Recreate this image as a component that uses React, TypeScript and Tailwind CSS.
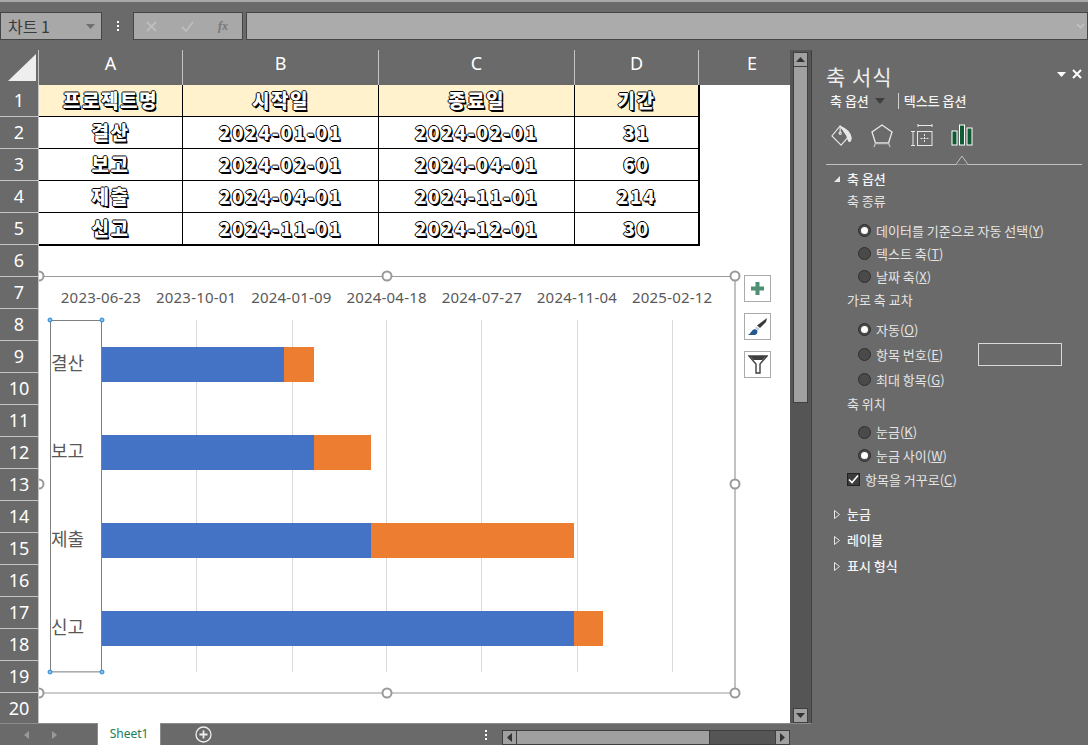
import React from "react";

const KR = "font-['Noto_Sans_CJK_KR','Noto_Sans',sans-serif]";
const rows = [
  ["프로젝트명", "시작일", "종료일", "기간"],
  ["결산", "2024-01-01", "2024-02-01", "31"],
  ["보고", "2024-02-01", "2024-04-01", "60"],
  ["제출", "2024-04-01", "2024-11-01", "214"],
  ["신고", "2024-11-01", "2024-12-01", "30"],
];
const cols = [
  { l: "A", w: "w-[144px]" },
  { l: "B", w: "w-[196px]" },
  { l: "C", w: "w-[196px]" },
  { l: "D", w: "w-[124px]" },
  { l: "E", w: "w-[106px]" },
];
const bodyCols = ["w-[144px]", "w-[196px]", "w-[196px]", "w-[123px]"];
const fancy =
  "font-black text-[19px] tracking-[1.6px] text-white [text-shadow:1px_0_0_#000,-1px_0_0_#000,0_1px_0_#000,0_-1px_0_#000,1.5px_1.5px_0_#000]";

function Radio({ on, label, u, h = "h-[25px]" }: { on?: boolean; label: string; u: string; h?: string }) {
  return (
    <div className={"flex items-center pl-[11px] " + h}>
      <span className="flex h-[13px] w-[13px] items-center justify-center rounded-full border border-[#2e2e2e] bg-[#4a4a4a]">
        {on && <span className="h-[7px] w-[7px] rounded-full bg-white" />}
      </span>
      <span className="ml-[5px] text-[13px] text-[#e4e4e4]">
        {label}(<span className="underline">{u}</span>)
      </span>
    </div>
  );
}

function Handle({ x, y }: { x: number; y: number }) {
  return <circle cx={x} cy={y} r={4.5} fill="#fff" stroke="#9a9a9a" strokeWidth={2} />;
}

function Chart() {
  const grid = [196, 292, 386, 481, 577, 672];
  const dates = ["2023-06-23", "2023-10-01", "2024-01-09", "2024-04-18", "2024-07-27", "2024-11-04", "2025-02-12"];
  const bars = [
    ["결산", 347, 284, 314],
    ["보고", 435, 314, 371],
    ["제출", 523, 371, 574],
    ["신고", 611, 574, 603],
  ] as const;
  return (
    <svg className="absolute left-[39px] top-0" width={751} height={673} viewBox="39 50 751 673">
      <rect x={39} y={276} width={696} height={417} fill="#fff" />
      <path d="M39 276.500H735V693H39" fill="none" stroke="#9a9a9a" strokeWidth={1.2} />
      {grid.map((x) => (
        <line key={x} x1={x + 0.5} x2={x + 0.5} y1={320} y2={672} stroke="#d9d9d9" />
      ))}
      {dates.map((d, i) => (
        <text key={d} x={101 + i * 95.2} y={303} textAnchor="middle" fontSize={15} letterSpacing={0.2} fill="#595959" fontFamily="'Noto Sans','Open Sans',sans-serif">
          {d}
        </text>
      ))}
      <rect x={50.5} y={320.5} width={51} height={351} fill="none" stroke="#808080" />
      <line x1={50} x2={102} y1={672} y2={672} stroke="#bdbdbd" strokeWidth={1.5} />
      {bars.map(([n, y, m, e]) => (
        <g key={n}>
          <rect x={102} y={y} width={m - 102} height={35} fill="#4472c4" />
          <rect x={m} y={y} width={e - m} height={35} fill="#ed7d31" />
          <text x={51} y={y + 23} fontSize={18} fill="#595959" fontFamily="'Noto Sans CJK KR',sans-serif">
            {n}
          </text>
        </g>
      ))}
      {[[50, 320], [102, 320], [50, 672], [102, 672]].map(([x, y]) => (
        <circle key={x + "-" + y} cx={x} cy={y} r={2} fill="#7cc0f0" stroke="#2f86d8" strokeWidth={1} />
      ))}
      <Handle x={39} y={276} />
      <Handle x={387} y={276} />
      <Handle x={735} y={276} />
      <Handle x={39} y={484} />
      <Handle x={735} y={484} />
      <Handle x={39} y={693} />
      <Handle x={387} y={693} />
      <Handle x={735} y={693} />
    </svg>
  );
}

function ChartButtons() {
  const cls = "flex h-[27px] w-[27px] items-center justify-center border border-[#ababab] bg-white";
  return (
    <div className="absolute left-[744px] top-[225px] flex flex-col gap-[11px]">
      <div className={cls}>
        <svg width="15" height="15" viewBox="0 0 15 15"><path d="M5.500 1h4v4.500H14v4H9.500V14h-4V9.500H1v-4h4.500z" fill="#4f8f73" /></svg>
      </div>
      <div className={cls}>
        <svg width="20" height="20" viewBox="0 0 20 20">
          <path d="M19 1l-1 4-6 6-3-2.500z" fill="#3a3a3a" />
          <path d="M8.500 9.500l3 2.500-1.500 1.500-2.800-2.400z" fill="#b8c8dc" />
          <path d="M6.500 12c2 .5 3 1.500 3 2.500 0 1.500-1 3-2.500 3.500H0c3-1.500 3-4.500 6.500-6z" fill="#23598f" />
        </svg>
      </div>
      <div className={cls}>
        <svg width="20" height="19" viewBox="0 0 20 19">
          <path d="M1 1h18l-7 8v9H8V9z" fill="#fff" stroke="#3f3f3f" strokeWidth="1.400" />
          <path d="M2 1h16l-3.500 4h-9z" fill="#3f3f3f" />
        </svg>
      </div>
    </div>
  );
}

function Sheet() {
  const headBorder = "border-r border-[#c4c4c4]";
  return (
    <div className="relative h-[673px] w-[790px] overflow-hidden bg-white">
      <div className="flex h-[35px] bg-[#6a6a6a]">
        <div className={"relative h-[35px] w-[39px] shrink-0 " + headBorder}>
          <svg className="absolute left-[7px] top-[4px]" width="30" height="28" viewBox="0 0 30 28"><path d="M29 0v27H1z" fill="#eeeeee" /></svg>
        </div>
        {cols.map((c, i) => (
          <div key={c.l} className={"flex shrink-0 items-center justify-center pb-[8px] text-[18px] text-white font-['Noto_Sans',sans-serif] " + c.w + (i < 4 ? " " + headBorder : "")}>
            {c.l}
          </div>
        ))}
      </div>
      <div className="flex">
        <div className="w-[39px] shrink-0 bg-[#6a6a6a]">
          {Array.from({ length: 20 }, (_, i) => (
            <div key={i} className="flex h-[32px] items-center justify-center border-b border-r border-[#c4c4c4] text-[18px] text-white font-['Noto_Sans',sans-serif]">
              {i + 1}
            </div>
          ))}
        </div>
        <div className={"self-start border-b-2 border-r-2 border-black " + KR}>
          {rows.map((r, i) => (
            <div key={i} className={"flex " + (i === 4 ? "h-[31px]" : "h-[32px] border-b border-black") + (i === 0 ? " bg-[#fff2cc]" : " bg-white")}>
              {r.map((t, j) => (
                <div key={j} className={"flex items-center justify-center " + bodyCols[j] + (j < 3 ? " border-r border-black" : "") + " " + fancy}>
                  {t}
                </div>
              ))}
            </div>
          ))}
        </div>
      </div>
      <Chart />
      <ChartButtons />
    </div>
  );
}

function VScroll() {
  return (
    <div className="flex h-[673px] w-[21px] flex-col bg-[#555555] pl-[3px] pt-[2px]">
      <div className="flex h-[15px] w-[15px] items-center justify-center border border-[#3f3f3f] bg-[#a0a0a0]">
        <svg width="9" height="5"><path d="M0 5h9L4.500 0z" fill="#333" /></svg>
      </div>
      <div className="h-[336px] w-[15px] border-x border-b border-[#3f3f3f] bg-[#a0a0a0]" />
      <div className="flex-1" />
      <div className="flex h-[15px] w-[15px] items-center justify-center border border-[#3f3f3f] bg-[#a0a0a0]">
        <svg width="9" height="5"><path d="M0 0h9L4.500 5z" fill="#333" /></svg>
      </div>
    </div>
  );
}

function Panel() {
  const heading = "text-[13px] text-[#e4e4e4]";
  const strong = "text-[13px] font-medium text-[#f4f4f4]";
  return (
    <div className={"h-full flex-1 border-l border-[#3f3f3f] pl-[14px] pr-[6px] pt-[12px] " + KR}>
      <div className="flex items-center justify-between">
        <span className="text-[21px] leading-[28px] tracking-[1px] text-[#eeeeee]">축 서식</span>
        <div className="mb-[4px] flex items-center gap-[6px]">
          <svg width="9" height="5"><path d="M0 0h9L4.500 5z" fill="#fff" /></svg>
          <svg width="10" height="10" viewBox="0 0 10 10"><path d="M1 1l8 8M9 1l-8 8" stroke="#fff" strokeWidth="2" /></svg>
        </div>
      </div>
      <div className={"mt-[2px] flex h-[18px] items-center pl-[4px] " + strong}>
        <span>축 옵션</span>
        <svg className="ml-[6px]" width="10" height="6"><path d="M0 0h10L5 6z" fill="#3d3d3d" /></svg>
        <span className="ml-[13px] mr-[5px] h-[16px] w-px bg-[#d0d0d0]" />
        <span>텍스트 옵션</span>
      </div>
      <div className="mt-[14px] flex h-[26px] items-start gap-[18px] pl-[5px]">
        <svg width="22" height="24" viewBox="0 0 24 24" fill="none" stroke="#e8e8e8" strokeWidth="1.200">
          <path d="M10 1L1 12l10 10 8-9z" />
          <path d="M10 1v7" /><circle cx="10" cy="9" r="1.200" />
          <path d="M11 2c5 2 10 6 11 12 0 4-2 5-3 3l-2-6z" fill="#e8e8e8" />
        </svg>
        <svg width="22" height="24" viewBox="0 0 22 24" fill="none" stroke="#e8e8e8" strokeWidth="1.300">
          <path d="M11 1l10 7-3.500 11h-13L1 8z" />
          <path d="M3 23l1.500-4M19 23l-1.500-4M4.500 19.500h13" stroke="#bdbdbd" />
        </svg>
        <svg width="22" height="22" viewBox="0 0 22 22" fill="none" stroke="#e8e8e8" strokeWidth="1">
          <path d="M7 1.500h14M7 0v3M21 0v3M0 7.500h4M0 21.500h4M2 7.500v14" />
          <rect x="6.500" y="7.500" width="14.500" height="14" />
          <path d="M13.500 10v9M9.500 14.500h8" strokeDasharray="2 1" />
        </svg>
        <svg width="22" height="22" viewBox="0 0 22 22">
          <rect x="1" y="7" width="5" height="14" fill="#0f5c34" stroke="#fff" />
          <rect x="8.500" y="1" width="5" height="20" fill="#0f5c34" stroke="#fff" />
          <rect x="16" y="4" width="5" height="17" fill="#0f5c34" stroke="#fff" />
        </svg>
      </div>
      <div className="relative mt-[14px] h-px bg-[#c0c0c0]">
        <svg className="absolute left-[129px] top-[-9px]" width="14" height="10"><path d="M0 9.500h1L7 1l6 8.500h1" fill="#686868" stroke="#c0c0c0" /></svg>
      </div>
      <div className="mt-[4px] flex h-[20px] items-center">
        <svg className="ml-[8px] mr-[7px]" width="6" height="6"><path d="M6 0v6H0z" fill="#e8e8e8" /></svg>
        <span className={strong}>축 옵션</span>
      </div>
      <div className="pl-[21px]">
        <div className={"flex h-[24px] items-center " + heading}>축 종류</div>
        <div className="mt-[6px]">
          <Radio on h="h-[23px]" label="데이터를 기준으로 자동 선택" u="Y" />
          <Radio h="h-[23px]" label="텍스트 축" u="T" />
          <Radio h="h-[23px]" label="날짜 축" u="X" />
        </div>
        <div className={"flex h-[24px] items-center " + heading}>가로 축 교차</div>
        <div className="mt-[5px]">
          <Radio on label="자동" u="O" />
          <div className="flex items-center">
            <div className="w-[131px]"><Radio label="항목 번호" u="E" /></div>
            <div className="h-[23px] w-[84px] border border-[#d8d8d8]" />
          </div>
          <Radio label="최대 항목" u="G" />
        </div>
        <div className={"flex h-[23px] items-center " + heading}>축 위치</div>
        <div className="mt-[5px]">
          <Radio h="h-[24px]" label="눈금" u="K" />
          <Radio on h="h-[23px]" label="눈금 사이" u="W" />
        </div>
        <div className="flex h-[25px] items-center">
          <span className="flex h-[13px] w-[13px] items-center justify-center border border-[#222] bg-[#3c3c3c]">
            <svg width="11" height="9" viewBox="0 0 11 9"><path d="M1 4.500l3 3 6-7" fill="none" stroke="#fff" strokeWidth="1.600" /></svg>
          </span>
          <span className="ml-[5px] text-[13px] text-[#e4e4e4]">항목을 거꾸로(<span className="underline">C</span>)</span>
        </div>
      </div>
      <div className="mt-[9px]">
        {["눈금", "레이블", "표시 형식"].map((t) => (
          <div key={t} className="flex h-[26px] items-center">
            <svg className="ml-[8px] mr-[7px]" width="6" height="9"><path d="M.5.5l5 4-5 4z" fill="none" stroke="#e8e8e8" /></svg>
            <span className={strong}>{t}</span>
          </div>
        ))}
      </div>
    </div>
  );
}

export default function App() {
  return (
    <div className={"h-[745px] w-[1088px] overflow-hidden bg-[#6a6a6a] " + KR}>
      <div className="h-[2px] bg-[#a8a8a8]" />
      <div className="flex h-[48px] items-start pt-[10px]">
        <div className="flex h-[28px] w-[102px] items-center justify-between border border-[#454545] bg-[#a8a8a8] pl-[7px] pr-[6px] text-[16px] text-[#3a3a3a]">
          <span>차트 1</span>
          <svg width="9" height="5"><path d="M0 0h9L4.500 5z" fill="#707070" /></svg>
        </div>
        <div className="flex h-[28px] w-[31px] flex-col items-center justify-center gap-[2px]">
          <span className="h-[2px] w-[2px] bg-white" /><span className="h-[2px] w-[2px] bg-white" /><span className="h-[2px] w-[2px] bg-white" />
        </div>
        <div className="flex h-[28px] w-[110px] items-center gap-[24px] border border-[#454545] bg-[#a8a8a8] pl-[12px]">
          <svg width="11" height="11" viewBox="0 0 11 11"><path d="M1 1l9 9M10 1l-9 9" stroke="#bdbdbd" strokeWidth="1.800" /></svg>
          <svg width="13" height="11" viewBox="0 0 13 11"><path d="M1 6l4 4 7-9" fill="none" stroke="#bdbdbd" strokeWidth="1.800" /></svg>
          <span className="text-[12px] font-bold italic text-[#777] font-['Liberation_Serif',serif]">fx</span>
        </div>
        <div className="ml-[3px] flex h-[28px] flex-1 items-center justify-end border border-[#454545] bg-[#ababab] pr-[2px]">
          <svg width="9" height="6" viewBox="0 0 9 6"><path d="M1 1l3.500 3.500L8 1" fill="none" stroke="#c4c4c4" strokeWidth="1.500" /></svg>
        </div>
      </div>
      <div className="flex h-[673px]">
        <Sheet />
        <VScroll />
        <Panel />
      </div>
      <div className="flex h-[22px] w-[811px] items-start">
        <div className="flex h-[22px] w-[97px] items-center gap-[23px] border-t border-[#8c8c8c] pl-[24px]">
          <svg width="5" height="8"><path d="M5 0v8L0 4z" fill="#9a9a9a" /></svg>
          <svg width="5" height="8"><path d="M0 0v8l5-4z" fill="#9a9a9a" /></svg>
        </div>
        <div className="flex h-[22px] w-[64px] items-center justify-center border-x border-[#8c8c8c] bg-white text-[12px] text-[#1d7a55] font-['Noto_Sans',sans-serif]">Sheet1</div>
        <div className="flex h-[22px] w-[313px] items-center border-t border-[#8c8c8c] pl-[34px]">
          <svg width="17" height="17" viewBox="0 0 17 17"><circle cx="8.500" cy="8.500" r="7.500" fill="none" stroke="#eee" strokeWidth="1.300" /><path d="M8.500 4.500v8M4.500 8.500h8" stroke="#eee" strokeWidth="1.800" /></svg>
        </div>
        <div className="flex h-[22px] w-[24px] flex-col items-center justify-center gap-[2px] border-t border-[#8c8c8c]">
          <span className="h-[2px] w-[2px] bg-white" /><span className="h-[2px] w-[2px] bg-white" /><span className="h-[2px] w-[2px] bg-white" />
        </div>
        <div className="flex h-[22px] flex-1 items-end border-t border-[#8c8c8c] pl-[4px]">
          <div className="flex h-[15px] w-[288px] items-stretch border border-[#3f3f3f] bg-[#555555]">
            <div className="flex w-[14px] items-center justify-center border-r border-[#3f3f3f] bg-[#a0a0a0]"><svg width="5" height="9"><path d="M5 0v9L0 4.500z" fill="#333" /></svg></div>
            <div className="w-[193px] border-r border-[#3f3f3f] bg-[#a0a0a0]" />
            <div className="flex-1" />
            <div className="flex w-[14px] items-center justify-center border-l border-[#3f3f3f] bg-[#a0a0a0]"><svg width="5" height="9"><path d="M0 0v9l5-4.500z" fill="#333" /></svg></div>
          </div>
        </div>
      </div>
    </div>
  );
}
